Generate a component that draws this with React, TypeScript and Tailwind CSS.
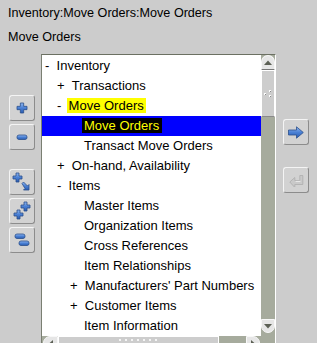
import React from 'react';

type Row = {
  label: string;
  sign?: '+' | '-';
  pad: string;
  mark?: boolean;
  selected?: boolean;
};

const rows: Row[] = [
  { label: 'Inventory', sign: '-', pad: 'pl-[3px]' },
  { label: 'Transactions', sign: '+', pad: 'pl-[15px]' },
  { label: 'Move Orders', sign: '-', pad: 'pl-[15px]', mark: true },
  { label: 'Move Orders', pad: 'pl-[40px]', selected: true },
  { label: 'Transact Move Orders', pad: 'pl-[42px]' },
  { label: 'On-hand, Availability', sign: '+', pad: 'pl-[15px]' },
  { label: 'Items', sign: '-', pad: 'pl-[15px]' },
  { label: 'Master Items', pad: 'pl-[42px]' },
  { label: 'Organization Items', pad: 'pl-[42px]' },
  { label: 'Cross References', pad: 'pl-[42px]' },
  { label: 'Item Relationships', pad: 'pl-[42px]' },
  { label: "Manufacturers' Part Numbers", sign: '+', pad: 'pl-[28px]' },
  { label: 'Customer Items', sign: '+', pad: 'pl-[28px]' },
  { label: 'Item Information', pad: 'pl-[42px]' },
];

function Grad({ id }: { id: string }) {
  return (
    <defs>
      <linearGradient id={id} x1="0" y1="0" x2="0" y2="1">
        <stop offset="0" stopColor="#8fb6ef" />
        <stop offset="0.5" stopColor="#4a80d4" />
        <stop offset="1" stopColor="#2a5cb0" />
      </linearGradient>
    </defs>
  );
}

function Plus({ x, y, s, id }: { x: number; y: number; s: number; id: string }) {
  const a = s / 3;
  return (
    <path
      d={`M${x + a} ${y}h${a}v${a}h${a}v${a}h${-a}v${a}h${-a}v${-a}h${-a}v${-a}h${a}z`}
      fill={`url(#${id})`}
      stroke="#2b4f8c"
      strokeWidth="0.8"
    />
  );
}

function Bar({ x, y, id }: { x: number; y: number; id: string }) {
  return <rect x={x} y={y} width="10" height="4.5" rx="2" fill={`url(#${id})`} stroke="#2b4f8c" strokeWidth="0.8" />;
}

function ToolButton({ children, className = '' }: { children: React.ReactNode; className?: string }) {
  return (
    <div
      className={`w-[26px] h-[26px] flex items-center justify-center rounded-[3px] border border-t-[#f4f4f4] border-l-[#f4f4f4] border-b-[#8c8c8c] border-r-[#8c8c8c] bg-[#d2d2d2] ${className}`}
    >
      {children}
    </div>
  );
}

function Dots() {
  return (
    <svg width="12" height="12" viewBox="0 0 12 12">
      <rect x="7" y="2" width="2" height="2" fill="#fff" />
      <rect x="2" y="5" width="2" height="2" fill="#fff" />
      <rect x="7" y="7" width="2" height="2" fill="#fff" />
      <rect x="8" y="3" width="1" height="1" fill="#8a8a8a" />
      <rect x="3" y="6" width="1" height="1" fill="#8a8a8a" />
      <rect x="8" y="8" width="1" height="1" fill="#8a8a8a" />
    </svg>
  );
}

function HDots() {
  return (
    <svg width="42" height="4" viewBox="0 0 42 4">
      {[0, 1, 2, 3, 4, 5, 6].map((i) => (
        <rect key={i} x={i * 6 + 1} y="1" width="2" height="2" fill="#f4f4f4" />
      ))}
    </svg>
  );
}

export default function App(): React.ReactElement {
  return (
    <div className="w-[317px] h-[343px] bg-[#cccccc] overflow-hidden font-['Liberation_Sans',Arial,sans-serif] text-[13px] text-black">
      <div className="pl-2 pt-[5px] leading-4 text-[12.6px]">Inventory:Move Orders:Move Orders</div>
      <div className="pl-2 pt-2 leading-4 text-[12.6px]">Move Orders</div>

      <div className="flex items-start mt-[9px]">
        {/* left tool buttons */}
        <div className="w-[41px] pl-[9px] pt-[41px] flex flex-col gap-[3px]">
          <ToolButton>
            <svg width="14" height="14" viewBox="0 0 14 14">
              <Grad id="g1" />
              <Plus x={2} y={2} s={10} id="g1" />
            </svg>
          </ToolButton>
          <ToolButton>
            <svg width="14" height="14" viewBox="0 0 14 14">
              <Grad id="g2" />
              <Bar x={2} y={5} id="g2" />
            </svg>
          </ToolButton>
          <ToolButton className="mt-[16px]">
            <svg width="20" height="20" viewBox="0 0 20 20">
              <Grad id="g3" />
              <Plus x={1} y={1} s={9} id="g3" />
              <path d="M10 11.5l1.5-1.5 4 4 1.5-1.5V18h-5.5l1.5-1.5z" fill="url(#g3)" stroke="#2b4f8c" strokeWidth="0.8" />
            </svg>
          </ToolButton>
          <ToolButton>
            <svg width="20" height="20" viewBox="0 0 20 20">
              <Grad id="g4" />
              <Plus x={9} y={1} s={9} id="g4" />
              <Plus x={2} y={9} s={9} id="g4" />
            </svg>
          </ToolButton>
          <ToolButton>
            <svg width="20" height="20" viewBox="0 0 20 20">
              <Grad id="g5" />
              <Bar x={3} y={4} id="g5" />
              <Bar x={7} y={11} id="g5" />
            </svg>
          </ToolButton>
        </div>

        {/* tree panel */}
        <div className="w-[235px] h-[300px] flex flex-col border-t border-l border-r border-t-[#6b7062] border-l-[#7a7f72] border-r-white">
          <div className="flex h-[281px]">
            <div className="flex-1 bg-white pt-[1px] overflow-hidden">
              {rows.map((r, i) => (
                <div
                  key={i}
                  className={`h-5 leading-5 whitespace-nowrap ${r.pad} ${r.selected ? 'bg-[#0000ff]' : ''}`}
                >
                  {r.sign && <span>{r.sign}{'\u00a0\u00a0'}</span>}
                  {r.mark ? (
                    <span className="bg-[#ffff00] px-[2px] -ml-[2px]">{r.label}</span>
                  ) : r.selected ? (
                    <span className="bg-black text-[#ffff00] px-[2px] pr-[3px]">{r.label}</span>
                  ) : (
                    <span>{r.label}</span>
                  )}
                </div>
              ))}
            </div>
            {/* vertical scrollbar */}
            <div className="w-[14px] bg-[#a6ab9d] flex flex-col">
              <div className="h-[15px] rounded-t-[7px] bg-[#e6e6e6] border border-[#f8f8f8] border-b-[#777] flex items-center justify-center">
                <svg width="8" height="5" viewBox="0 0 8 5">
                  <path d="M0 5L4 0.5 8 5z" fill="#5c6055" />
                </svg>
              </div>
              <div className="h-[47px] bg-[#cdcdcd] border border-white border-b-[#8a8a8a] flex items-center justify-center">
                <Dots />
              </div>
              <div className="flex-1" />
              <div className="h-[14px] mb-[3px] rounded-b-[7px] bg-[#e6e6e6] border border-[#f8f8f8] flex items-center justify-center">
                <svg width="8" height="5" viewBox="0 0 8 5">
                  <path d="M0 0L4 4.5 8 0z" fill="#5c6055" />
                </svg>
              </div>
            </div>
          </div>
          {/* horizontal scrollbar */}
          <div className="flex h-[15px] bg-[#a6ab9d]">
            <div className="w-[15px] ml-[1px] rounded-l-[7px] bg-[#e6e6e6] border border-[#f8f8f8] flex items-center justify-center">
              <svg width="5" height="8" viewBox="0 0 5 8">
                <path d="M5 0L0.5 4 5 8z" fill="#5c6055" />
              </svg>
            </div>
            <div className="w-[161px] bg-[#cdcdcd] border border-white flex justify-center items-start pt-[1px]">
              <HDots />
            </div>
            <div className="flex-1" />
            <div className="w-[14px] mr-[15px] rounded-r-[7px] bg-[#e6e6e6] border border-[#f8f8f8] flex items-center justify-center">
              <svg width="5" height="8" viewBox="0 0 5 8">
                <path d="M0 0L4.5 4 0 8z" fill="#5c6055" />
              </svg>
            </div>
          </div>
        </div>

        {/* right move buttons */}
        <div className="pl-[7px] pt-[65px] flex flex-col gap-[22px]">
          <ToolButton>
            <svg width="16" height="13" viewBox="0 0 16 13">
              <Grad id="g6" />
              <path d="M0.5 4h8V0.8l6.8 5.7-6.8 5.7V9h-8z" fill="url(#g6)" stroke="#2b4f8c" strokeWidth="0.8" />
            </svg>
          </ToolButton>
          <ToolButton>
            <svg width="15" height="13" viewBox="0 0 15 13">
              <path
                d="M0.8 8l5-4.5V6.5h5V1.5h3V10.5h-8v3z"
                fill="#c9c9c9"
                stroke="#adadad"
                strokeWidth="0.8"
              />
              <path d="M6.6 7.4h4.8" stroke="#f4f4f4" strokeWidth="0.8" />
            </svg>
          </ToolButton>
        </div>
      </div>
    </div>
  );
}
